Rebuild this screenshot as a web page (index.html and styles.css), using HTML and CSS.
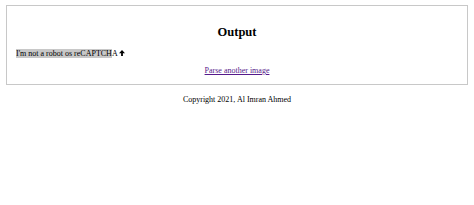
FILE: index.html
```html
<!DOCTYPE html>
<html lang="en">
<head>
    <meta charset="UTF-8">
    <title>Output</title>
    <link rel="stylesheet" href="styles.css">
</head>
<body>

<div class="container">
    <h2>Output</h2>

    <!-- parsed result -->
    <p class="result"><span class="mark">I'm not a robot os reCAPTCH</span>A <svg class="arrow" width="6" height="6" viewBox="0 0 10 10"><path d="M5 0 L10 5.5 L6.5 5.5 L6.5 10 L3.5 10 L3.5 5.5 L0 5.5 Z" fill="#000"/></svg></p>

    <p class="again"><a href="#">Parse another image</a></p>
</div>

<p class="footer">Copyright 2021, Al Imran Ahmed</p>

</body>
</html>
```

FILE: styles.css
```css
body {
    font-family: "Liberation Serif", "Times New Roman", serif;
    font-size: 8px;
    margin: 5px 6px;
    color: #000;
    background-color: #fff;
}

.container {
    border: 1px solid #c8c8c8;
    padding: 15px 9px 9px;
}

h2 {
    text-align: center;
    font-size: 12.5px;
    margin: 4px 0 9px;
}

.result {
    margin: 0;
}

.mark {
    background-color: #c8c8c8;
}

.arrow {
    vertical-align: 0;
}

.again {
    text-align: center;
    margin: 8px 0 0;
}

.again a {
    color: #551a8b;
}

.footer {
    text-align: center;
    margin: 10px 0;
}
```
